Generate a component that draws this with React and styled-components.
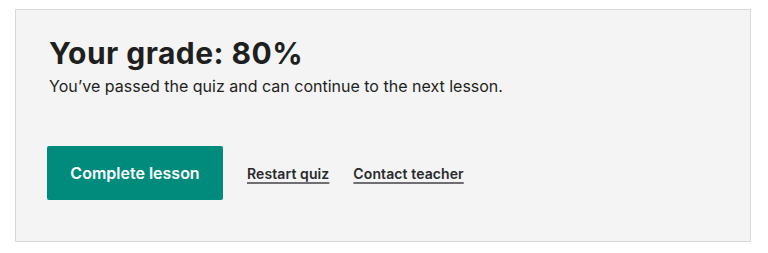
import React from 'react'
import styled, { createGlobalStyle } from 'styled-components'

const Global = createGlobalStyle`
  body {
    margin: 0;
    background: #ffffff;
    font-family: Inter, "Liberation Sans", sans-serif;
  }
`

const Page = styled.div`
  padding: 9px 17px 0 15px;
`

const Card = styled.section`
  background: #f3f4f3;
  border: 1px solid #d9d9d9;
  padding: 24px 31px 0;
  height: 233px;
  box-sizing: border-box;
`

const Title = styled.h2`
  margin: 0 0 0 2px;
  font-size: 30px;
  line-height: 38px;
  font-weight: 700;
  letter-spacing: 0.45px;
  color: #1f1f1f;
`

const Text = styled.p`
  margin: 2px 0 0 2px;
  font-size: 16px;
  line-height: 24px;
  color: #1f1f1f;
`

const Actions = styled.div`
  display: flex;
  align-items: center;
  gap: 24px;
  margin-top: 48px;
`

const Button = styled.button`
  width: 176px;
  height: 54px;
  padding: 0;
  border: none;
  border-radius: 2px;
  background: #008b7d;
  color: #ffffff;
  font-family: inherit;
  font-size: 16px;
  font-weight: 600;
  cursor: pointer;
`

const Link = styled.a`
  color: #2a2a2e;
  font-size: 14px;
  font-weight: 600;
  letter-spacing: 0.1px;
  text-decoration: underline;
  text-decoration-thickness: 2px;
  text-decoration-color: #6e6e73;
  text-underline-offset: 3px;
  cursor: pointer;
`

const App = () => {
  return (
    <Page>
      <Global />
      <Card>
        <Title>Your grade: 80%</Title>
        <Text>You’ve passed the quiz and can continue to the next lesson.</Text>
        <Actions>
          <Button>Complete lesson</Button>
          <Link>Restart quiz</Link>
          <Link>Contact teacher</Link>
        </Actions>
      </Card>
    </Page>
  )
}

export default App
